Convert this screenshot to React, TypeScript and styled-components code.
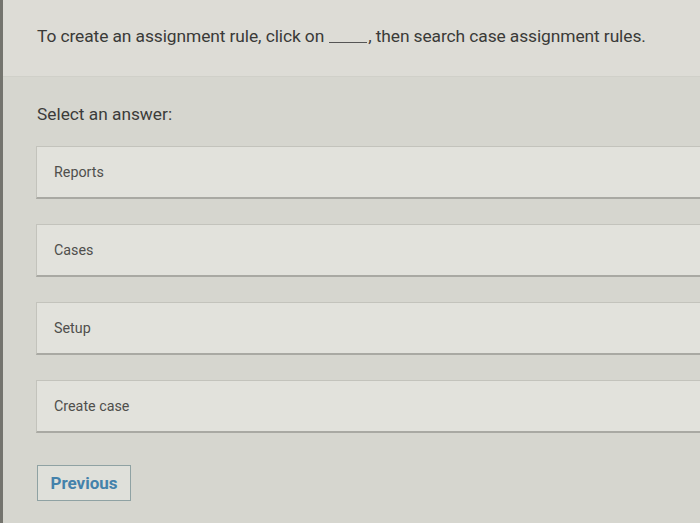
import React from "react";
import styled, { createGlobalStyle } from "styled-components";

const Global = createGlobalStyle`
  html, body { margin: 0; padding: 0; background: #d5d5ce; }
  body { font-family: Roboto, "Liberation Sans", Arial, sans-serif; }
`;

const Page = styled.div`
  width: 700px;
  height: 523px;
  box-sizing: border-box;
  border-left: 3px solid #74746e;
  background: #d6d6cf;
  overflow: hidden;
  display: flex;
  flex-direction: column;
`;

const QuestionBand = styled.div`
  height: 77px;
  box-sizing: border-box;
  background: #dddcd6;
  border-bottom: 1px solid #d0d0c9;
  padding: 24px 0 0 34px;
`;

const Question = styled.p`
  margin: 0;
  font-size: 17.4px;
  line-height: 24px;
  color: #3a3a38;
  letter-spacing: -0.1px;
`;

const Blank = styled.span`
  display: inline-block;
  width: 38px;
  border-bottom: 1px solid #555;
  margin: 0 1px 0 5px;
  transform: translateY(1px);
`;

const Body = styled.div`
  padding: 25px 0 0 33px;
  display: flex;
  flex-direction: column;
`;

const Prompt = styled.div`
  font-size: 17.3px;
  line-height: 24px;
  color: #3c3c3a;
  margin-left: 1px;
`;

const Options = styled.div`
  margin-top: 20px;
  display: flex;
  flex-direction: column;
  gap: 25px;
`;

const Option = styled.div`
  height: 53px;
  box-sizing: border-box;
  background: #e2e2dc;
  border: 1px solid #c3c3bc;
  border-bottom: 2px solid #a9a9a3;
  border-right: none;
  margin-right: -10px;
  display: flex;
  align-items: center;
  padding-left: 17px;
  font-size: 14.3px;
  color: #4f4f4c;
`;

const Previous = styled.button`
  margin-top: 32px;
  margin-left: 1px;
  align-self: flex-start;
  width: 94px;
  height: 36px;
  box-sizing: border-box;
  background: #dfe0da;
  border: 1.5px solid #8fa2a3;
  font-family: Roboto, "Liberation Sans", Arial, sans-serif;
  font-weight: 700;
  font-size: 17px;
  color: #4482ab;
  padding: 0;
`;

const options = ["Reports", "Cases", "Setup", "Create case"];

export default function App() {
  return (
    <Page>
      <Global />
      <QuestionBand>
        <Question>
          To create an assignment rule, click on<Blank />, then search case assignment rules.
        </Question>
      </QuestionBand>
      <Body>
        <Prompt>Select an answer:</Prompt>
        <Options>
          {options.map((o) => (
            <Option key={o}>{o}</Option>
          ))}
        </Options>
        <Previous>Previous</Previous>
      </Body>
    </Page>
  );
}
